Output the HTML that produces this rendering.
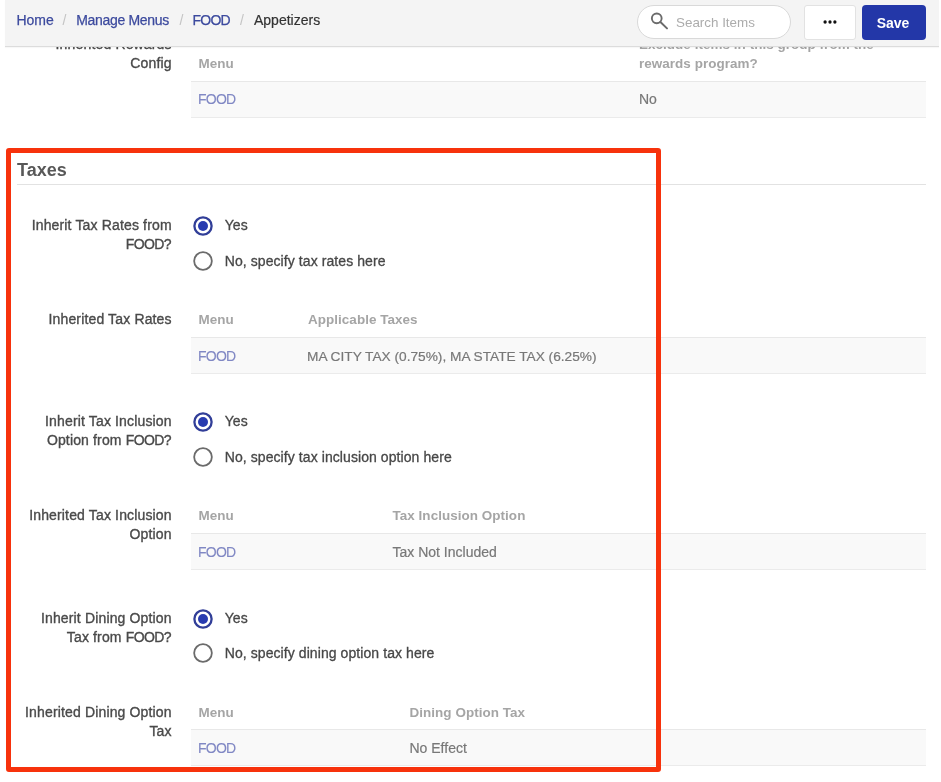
<!DOCTYPE html>
<html><head><meta charset="utf-8">
<style>
html,body{margin:0;padding:0;background:#fff;}
body{width:941px;height:782px;position:relative;overflow:hidden;will-change:transform;font-family:"Liberation Sans",sans-serif;color:#474747;}
.a{position:absolute;white-space:nowrap;}
.t{position:absolute;white-space:nowrap;font-size:14px;line-height:19px;}
.lbl{position:absolute;right:769.3px;text-align:right;font-size:14px;line-height:19px;white-space:nowrap;color:#4a4a4a;letter-spacing:0.15px;-webkit-text-stroke:0.35px #4a4a4a;}
.th{position:absolute;font-size:13.45px;letter-spacing:0.05px;line-height:19px;font-weight:bold;color:#a5a5a5;white-space:nowrap;}
.row{position:absolute;left:191px;width:735px;height:35.4px;background:#f9f9f9;border-top:1px solid #e8e8e8;border-bottom:1px solid #ebebeb;}
.link{color:#8088c4;-webkit-text-stroke:0.1px #8088c4;letter-spacing:-0.75px;margin-left:-1px;margin-top:0.4px;}
.val{color:#787878;-webkit-text-stroke:0.2px #787878;}
.opt{color:#474747;letter-spacing:0.08px;margin-left:-0.8px;-webkit-text-stroke:0.3px #474747;}
.radio{position:absolute;left:191.2px;width:24px;height:24px;}
</style></head><body>

<!-- rewards config (partially under header) -->
<div class="lbl" style="top:35.4px">Inherited Rewards</div>
<div class="lbl" style="top:54.4px">Config</div>
<div class="th" style="left:198.6px;top:54px">Menu</div>
<div class="th" style="left:639px;top:35px">Exclude items in this group from the</div>
<div class="th" style="left:639px;top:54px">rewards program?</div>
<div class="row" style="top:81px"></div>
<div class="t link" style="left:199px;top:90px">FOOD</div>
<div class="t val" style="left:639px;top:90px">No</div>

<!-- header -->
<div class="a" style="left:5px;top:0;width:934px;height:46px;background:#f4f4f4;border-bottom:1px solid #dcdcdc;box-shadow:0 1px 1px rgba(0,0,0,0.03)"></div>
<div class="t" style="left:16.4px;top:11px;color:#3c4a9e;-webkit-text-stroke:0.25px #3c4a9e">Home</div>
<div class="t" style="left:62.5px;top:11px;color:#c4c4c4">/</div>
<div class="t" style="left:76.2px;top:11px;color:#3c4a9e;-webkit-text-stroke:0.25px #3c4a9e;letter-spacing:-0.32px">Manage Menus</div>
<div class="t" style="left:179.5px;top:11px;color:#c4c4c4">/</div>
<div class="t" style="left:192.6px;top:11px;color:#3c4a9e;-webkit-text-stroke:0.25px #3c4a9e;letter-spacing:-0.8px">FOOD</div>
<div class="t" style="left:240px;top:11px;color:#c4c4c4">/</div>
<div class="t" style="left:254px;top:11px;color:#333;-webkit-text-stroke:0.2px #333">Appetizers</div>

<div class="a" style="left:637px;top:5px;width:152px;height:32px;background:#fff;border:1px solid #d9d9d9;border-radius:17px"></div>
<svg class="a" style="left:648px;top:10px" width="22" height="22" viewBox="0 0 22 22"><circle cx="8.75" cy="8.35" r="4.9" fill="none" stroke="#6b6b6b" stroke-width="1.9"/><line x1="12.4" y1="12" x2="19" y2="18.4" stroke="#6b6b6b" stroke-width="2" stroke-linecap="round"/></svg>
<div class="t" style="left:676px;top:12.6px;color:#acacac;font-size:13.4px">Search Items</div>

<div class="a" style="left:804px;top:5px;width:50px;height:33px;background:#fff;border:1px solid #e2e2e2;border-radius:3px"></div>
<svg class="a" style="left:815px;top:12px" width="30" height="20" viewBox="0 0 30 20"><circle cx="10.1" cy="10" r="1.65" fill="#111"/><circle cx="15" cy="10" r="1.65" fill="#111"/><circle cx="19.9" cy="10" r="1.65" fill="#111"/></svg>

<div class="a" style="left:862px;top:5px;width:64px;height:35px;background:#2337a8;border-radius:4px"></div>
<div class="t" style="left:861px;top:13.5px;width:64px;text-align:center;color:#fff;font-weight:bold">Save</div>

<!-- Taxes section -->
<div class="a" style="left:17px;top:160.7px;font-size:18px;line-height:19px;font-weight:bold;color:#585858">Taxes</div>
<div class="a" style="left:17px;top:184px;width:909px;height:1px;background:#e2e2e2"></div>

<!-- S1 -->
<div class="lbl" style="top:216.1px">Inherit Tax Rates from</div>
<div class="lbl" style="top:235.2px"><span style="letter-spacing:-0.6px">FOOD</span>?</div>
<div class="radio" style="top:214.2px"><svg width="24" height="24" viewBox="0 0 24 24"><circle cx="12" cy="12" r="8.6" fill="none" stroke="#313e98" stroke-width="2.3"/><circle cx="12" cy="12" r="5" fill="#283bb0"/></svg></div>
<div class="t opt" style="left:225.5px;top:216.2px">Yes</div>
<div class="radio" style="top:248.9px"><svg width="24" height="24" viewBox="0 0 24 24"><circle cx="12" cy="12" r="8.85" fill="none" stroke="#6b6b6b" stroke-width="1.8"/></svg></div>
<div class="t opt" style="left:225.5px;top:252px">No, specify tax rates here</div>

<!-- S2 -->
<div class="lbl" style="top:310.1px">Inherited Tax Rates</div>
<div class="th" style="left:198.6px;top:310.2px">Menu</div>
<div class="th" style="left:308px;top:310.2px">Applicable Taxes</div>
<div class="row" style="top:336.8px"></div>
<div class="t link" style="left:199px;top:346.6px">FOOD</div>
<div class="t val" style="left:307px;top:346.6px;font-size:13.7px">MA CITY TAX (0.75%), MA STATE TAX (6.25%)</div>

<!-- S3 -->
<div class="lbl" style="top:412.3px">Inherit Tax Inclusion</div>
<div class="lbl" style="top:431.4px">Option from <span style="letter-spacing:-0.6px">FOOD</span>?</div>
<div class="radio" style="top:410.4px"><svg width="24" height="24" viewBox="0 0 24 24"><circle cx="12" cy="12" r="8.6" fill="none" stroke="#313e98" stroke-width="2.3"/><circle cx="12" cy="12" r="5" fill="#283bb0"/></svg></div>
<div class="t opt" style="left:225.5px;top:412.4px">Yes</div>
<div class="radio" style="top:445.1px"><svg width="24" height="24" viewBox="0 0 24 24"><circle cx="12" cy="12" r="8.85" fill="none" stroke="#6b6b6b" stroke-width="1.8"/></svg></div>
<div class="t opt" style="left:225.5px;top:447.6px">No, specify tax inclusion option here</div>

<!-- S4 -->
<div class="lbl" style="top:506.3px">Inherited Tax Inclusion</div>
<div class="lbl" style="top:525.4px">Option</div>
<div class="th" style="left:198.6px;top:506.4px">Menu</div>
<div class="th" style="left:392.5px;top:506.4px">Tax Inclusion Option</div>
<div class="row" style="top:532.8px"></div>
<div class="t link" style="left:199px;top:542.8px">FOOD</div>
<div class="t val" style="left:392.5px;top:542.8px">Tax Not Included</div>

<!-- S5 -->
<div class="lbl" style="top:608.5px">Inherit Dining Option</div>
<div class="lbl" style="top:627.6px">Tax from <span style="letter-spacing:-0.6px">FOOD</span>?</div>
<div class="radio" style="top:606.6px"><svg width="24" height="24" viewBox="0 0 24 24"><circle cx="12" cy="12" r="8.6" fill="none" stroke="#313e98" stroke-width="2.3"/><circle cx="12" cy="12" r="5" fill="#283bb0"/></svg></div>
<div class="t opt" style="left:225.5px;top:608.6px">Yes</div>
<div class="radio" style="top:641.3px"><svg width="24" height="24" viewBox="0 0 24 24"><circle cx="12" cy="12" r="8.85" fill="none" stroke="#6b6b6b" stroke-width="1.8"/></svg></div>
<div class="t opt" style="left:225.5px;top:643.8px">No, specify dining option tax here</div>

<!-- S6 -->
<div class="lbl" style="top:702.5px">Inherited Dining Option</div>
<div class="lbl" style="top:721.6px">Tax</div>
<div class="th" style="left:198.6px;top:702.6px">Menu</div>
<div class="th" style="left:409.5px;top:702.6px">Dining Option Tax</div>
<div class="row" style="top:728.9px"></div>
<div class="t link" style="left:199px;top:739px">FOOD</div>
<div class="t val" style="left:409.5px;top:739px">No Effect</div>

<!-- red highlight box -->
<div class="a" style="left:6px;top:148px;width:645px;height:614px;border:5px solid #f7320c;border-radius:3px"></div>

</body></html>
